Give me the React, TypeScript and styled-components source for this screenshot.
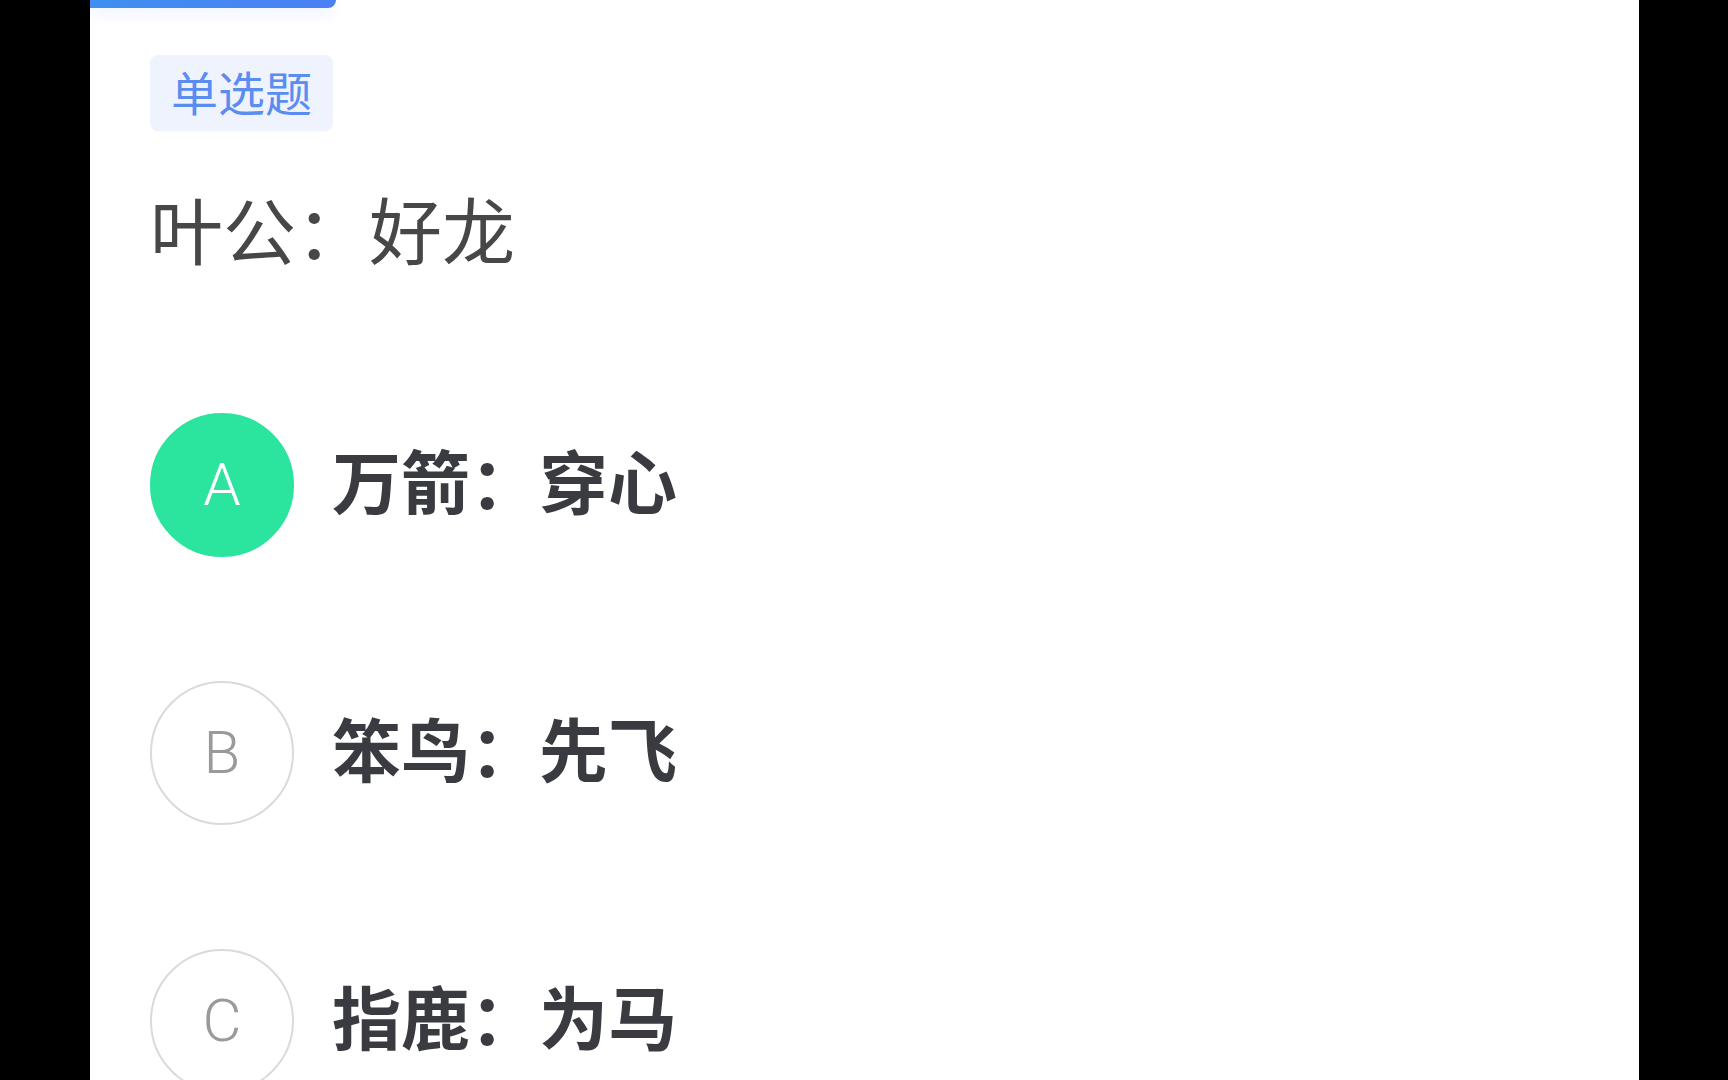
import styled, { createGlobalStyle } from "styled-components";

const GlobalStyle = createGlobalStyle`
  html, body {
    margin: 0;
    padding: 0;
    background: #000;
  }
  body {
    font-family: "Noto Sans CJK SC", "Noto Sans", sans-serif;
  }
`;

const Screen = styled.div`
  width: 1728px;
  height: 1080px;
  display: flex;
  justify-content: flex-start;
  overflow: hidden;
  background: #000;
`;

const Panel = styled.main`
  margin-left: 90px;
  width: 1549px;
  height: 1080px;
  background: #fff;
  overflow: hidden;
`;

const TopBar = styled.div`
  width: 246px;
  height: 8px;
  background: linear-gradient(90deg, #3f8ff1 0%, #4b80f4 100%);
  border-bottom-right-radius: 12px;
  box-shadow: 0 6px 14px rgba(70, 130, 240, 0.12);
`;

const Content = styled.section`
  padding: 0 60px;
  display: flex;
  flex-direction: column;
  align-items: flex-start;
`;

const Tag = styled.span`
  margin-top: 47px;
  height: 76px;
  box-sizing: border-box;
  padding: 0 21px 6px;
  display: inline-flex;
  align-items: center;
  border-radius: 8px;
  background: #eef3fd;
  color: #5b8df1;
  font-size: 47px;
  line-height: 1;
`;

const Question = styled.h2`
  margin: 60px 0 0;
  font-size: 73px;
  line-height: 72px;
  font-weight: 400;
  color: #474747;
`;

const Options = styled.ul`
  list-style: none;
  margin: 150px 0 0;
  padding: 0;
  display: flex;
  flex-direction: column;
  gap: 124px;
`;

const Option = styled.li`
  display: flex;
  align-items: center;
  gap: 38px;
  height: 144px;
`;

const Badge = styled.span<{ $active: boolean }>`
  width: 144px;
  height: 144px;
  box-sizing: border-box;
  border-radius: 50%;
  flex-shrink: 0;
  display: flex;
  align-items: center;
  justify-content: center;
  background: ${(p) => (p.$active ? "#2be49e" : "#fff")};
  border: 2px solid ${(p) => (p.$active ? "#2be49e" : "#dadada")};
  color: ${(p) => (p.$active ? "#fff" : "#9a9a9a")};
  font-family: Roboto, "Liberation Sans", sans-serif;
  font-weight: 300;
  font-size: 60px;
  line-height: 1;
`;

const OptionText = styled.span`
  font-size: 69px;
  line-height: 1;
  font-weight: 700;
  color: #393b40;
  margin-top: -12px;
`;

const options = [
  { key: "A", text: "万箭：穿心", active: true },
  { key: "B", text: "笨鸟：先飞", active: false },
  { key: "C", text: "指鹿：为马", active: false },
];

export default function App() {
  return (
    <>
      <GlobalStyle />
      <Screen>
        <Panel>
          <TopBar />
          <Content>
            <Tag>单选题</Tag>
            <Question>叶公：好龙</Question>
            <Options>
              {options.map((o) => (
                <Option key={o.key}>
                  <Badge $active={o.active}>{o.key}</Badge>
                  <OptionText>{o.text}</OptionText>
                </Option>
              ))}
            </Options>
          </Content>
        </Panel>
      </Screen>
    </>
  );
}
